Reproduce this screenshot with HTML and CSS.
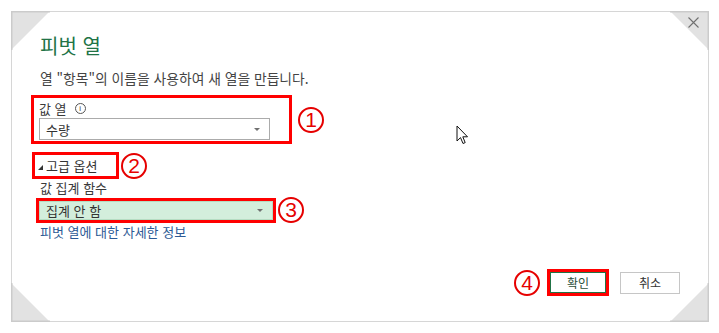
FILE: index.html
```html
<!DOCTYPE html>
<html lang="ko">
<head>
	<meta charset="UTF-8">
	<title>피벗 열</title>
	<link rel="stylesheet" href="styles.css">
</head>
<body>
	<div class="dialog">
		<svg class="corner tl" width="40" height="40" viewBox="0 0 40 40"><polygon points="0,0 39,0 0,39" fill="#e2e2e2"/><polyline points="39,0.75 0.75,0.75 0.75,39" fill="none" stroke="#cbcbcb" stroke-width="1.5"/></svg>
		<svg class="corner tr" width="40" height="40" viewBox="0 0 40 40"><polygon points="1,0 40,0 40,39" fill="#e2e2e2"/><polyline points="1,0.75 39.25,0.75 39.25,39" fill="none" stroke="#cbcbcb" stroke-width="1.5"/></svg>
		<svg class="corner bl" width="40" height="40" viewBox="0 0 40 40"><polygon points="0,1 0,40 39,40" fill="#e2e2e2"/><polyline points="0.75,1 0.75,39.25 39,39.25" fill="none" stroke="#cbcbcb" stroke-width="1.5"/></svg>
		<svg class="corner br" width="40" height="40" viewBox="0 0 40 40"><polygon points="40,1 40,40 1,40" fill="#e2e2e2"/><polyline points="39.25,1 39.25,39.25 1,39.25" fill="none" stroke="#cbcbcb" stroke-width="1.5"/></svg>
		<svg class="close" width="11" height="11" viewBox="0 0 11 11"><path d="M0.5 0.5 L10.5 10.5 M10.5 0.5 L0.5 10.5" stroke="#707070" stroke-width="1.1"/></svg>

		<div class="content">
			<h1 class="title">피벗 열</h1>
			<p class="desc">열 "항목"의 이름을 사용하여 새 열을 만듭니다.</p>

			<div class="row row-1">
				<div class="mark mark-1">
					<div class="field-label">값 열 <span class="info">i</span></div>
					<div class="select">수량<span class="caret"></span></div>
				</div>
				<span class="num">1</span>
			</div>

			<div class="row row-2">
				<div class="mark mark-2"><span class="tri"></span>고급 옵션</div>
				<span class="num">2</span>
			</div>
			<div class="agg-label">값 집계 함수</div>

			<div class="row row-3">
				<div class="mark mark-3">
					<div class="select select-green">집계 안 함<span class="caret"></span></div>
				</div>
				<span class="num">3</span>
			</div>
			<a class="more" href="#">피벗 열에 대한 자세한 정보</a>

			<div class="buttons">
				<span class="num">4</span>
				<div class="mark mark-4"><button class="btn btn-ok">확인</button></div>
				<button class="btn btn-cancel">취소</button>
			</div>
		</div>

		<svg class="cursor" width="13" height="21" viewBox="0 0 13 21"><path d="M1 1 L1 16 L4.5 12.6 L7 18.5 L9.2 17.6 L6.8 11.8 L11.5 11.8 Z" fill="#fff" stroke="#111" stroke-width="1" stroke-linejoin="miter"/></svg>
	</div>
</body>
</html>
```

FILE: styles.css
```css
body{
	margin:0;
	background:#fff;
	font-family:"Noto Sans CJK KR","Noto Sans",sans-serif;
	color:#3a3a3a;
}
.dialog{
	position:relative;
	box-sizing:border-box;
	width:698px;
	height:311px;
	margin:11px 0 0 11px;
	border:1px solid #d6d6d6;
}
.corner{
	position:absolute;
	display:block;
}
.tl{ left:-1px; top:-1px; }
.tr{ right:-1px; top:-1px; }
.bl{ left:-1px; bottom:-1px; }
.br{ right:-1px; bottom:-1px; }
.close{
	position:absolute;
	right:9px;
	top:5px;
}
.cursor{
	position:absolute;
	left:444px;
	top:113px;
}

.content{
	padding:22px 0 0 19px;
}
.title{
	margin:0 0 0 9px;
	font-size:20px;
	line-height:24px;
	font-weight:normal;
	color:#217346;
}
.desc{
	margin:11px 0 0 9px;
	font-size:13.8px;
	line-height:18px;
	color:#444;
}

.row{
	display:flex;
	align-items:center;
}
.mark{
	box-sizing:border-box;
	border:3px solid #f00;
}
.num{
	box-sizing:border-box;
	width:26px;
	height:26px;
	border:2px solid #e60000;
	border-radius:50%;
	color:#e60000;
	font-family:"Liberation Sans",sans-serif;
	font-size:21px;
	line-height:22px;
	text-align:center;
}

.row-1{
	margin-top:8px;
	gap:6px;
}
.mark-1{
	width:261px;
	padding:2px 19px 1px 5px;
}
.field-label{
	display:flex;
	align-items:center;
	font-size:13px;
	line-height:17px;
	margin-bottom:1px;
}
.info{
	box-sizing:border-box;
	width:11px;
	height:11px;
	margin-left:8px;
	border:1px solid #555;
	border-radius:50%;
	font-family:"Liberation Sans",sans-serif;
	font-size:8px;
	line-height:9px;
	text-align:center;
	color:#444;
}
.select{
	box-sizing:border-box;
	height:22px;
	display:flex;
	justify-content:space-between;
	align-items:center;
	padding:0 9px 0 6px;
	border:1px solid #ababab;
	font-size:13px;
	color:#333;
}
.caret{
	width:0;
	height:0;
	border-left:3px solid transparent;
	border-right:3px solid transparent;
	border-top:3px solid #707070;
}

.row-2{
	margin-top:8px;
	padding-left:1px;
	gap:2px;
}
.mark-2{
	width:87px;
	height:27px;
	display:flex;
	align-items:center;
	padding-left:3px;
	font-size:13px;
	color:#333;
}
.tri{
	width:0;
	height:0;
	margin:4px 3px 0 0;
	border-left:5px solid transparent;
	border-bottom:5px solid #333;
}
.agg-label{
	margin-left:9px;
	font-size:13px;
	line-height:18px;
}

.row-3{
	padding-left:5px;
	gap:2px;
}
.mark-3{
	width:240px;
}
.select-green{
	height:19px;
	background:#d3eedc;
	border-color:#b5dcc2;
}
.more{
	display:block;
	margin-left:9px;
	font-size:13px;
	line-height:18px;
	color:#2c5a95;
	text-decoration:none;
}

.buttons{
	display:flex;
	justify-content:flex-end;
	align-items:center;
	margin-top:28px;
	padding-right:28px;
}
.mark-4{
	margin:0 11px 0 7px;
	width:62px;
	height:27px;
}
.btn{
	display:block;
	box-sizing:border-box;
	padding:0;
	background:#fff;
	font-family:"Noto Sans CJK KR",sans-serif;
	font-size:12px;
	color:#333;
	cursor:pointer;
}
.btn-ok{
	width:56px;
	height:21px;
	border:1px solid #217346;
	color:#2d4f3a;
}
.btn-cancel{
	width:60px;
	height:22px;
	border:1px solid #c6c6c6;
}
```
